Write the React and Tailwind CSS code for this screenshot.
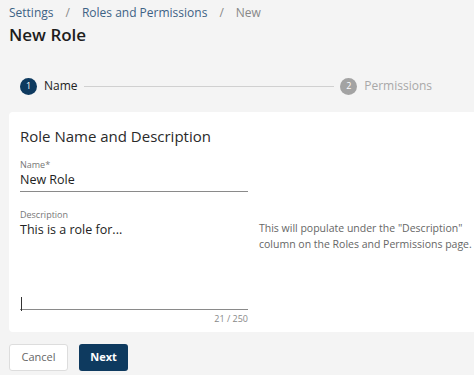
const Step = ({ n, label, active }) => (
  <div className="flex items-center gap-[7px]">
    <span
      className={`flex h-[17px] w-[17px] items-center justify-center rounded-full text-[9px] text-white ${
        active ? "bg-[#0e3a5f]" : "bg-[#a3a3a3]"
      }`}
    >
      {n}
    </span>
    <span className={`text-[12px] ${active ? "text-[#222]" : "text-[#a8a8a8]"}`}>
      {label}
    </span>
  </div>
);

export default function App() {
  return (
    <div
      className="min-h-[375px] w-[474px] overflow-hidden bg-[#f4f4f4] text-[#222]"
      style={{ fontFamily: '"Open Sans", sans-serif' }}
    >
      <div className="pl-[9px] pt-[4px]">
        <nav className="flex items-center text-[12px] leading-[18px]">
          <span className="text-[#3d6285]">Settings</span>
          <span className="mx-[12px] text-[#888]">/</span>
          <span className="text-[#3d6285]">Roles and Permissions</span>
          <span className="mx-[12px] text-[#888]">/</span>
          <span className="text-[#888]">New</span>
        </nav>
        <h1 className="mt-[2px] text-[17px] font-semibold leading-[22px] text-[#1d1d1d]">
          New Role
        </h1>
      </div>

      <div className="mt-[31px] flex items-center pl-[20px] pr-[42px]">
        <Step n={1} label="Name" active />
        <div className="mx-[6px] h-px flex-1 bg-[#d0d0d0]" />
        <Step n={2} label="Permissions" />
      </div>

      <div className="ml-[9px] mt-[17px] h-[220px] rounded-l-[4px] bg-white pl-[11px] pt-[13px]">
        <h2 className="text-[15px] leading-[22px] text-[#2a2a2a]">
          Role Name and Description
        </h2>
        <div className="mt-[12px] flex">
          <div className="w-[228px]">
            <div className="text-[9px] leading-[12px] text-[#777]">Name*</div>
            <div className="border-b border-[#8a8a8a] pb-[3px] text-[12.5px] leading-[17px]">
              New Role
            </div>
            <div className="mt-[17px] text-[9px] leading-[12px] text-[#777]">
              Description
            </div>
            <div className="relative h-[89px] border-b border-[#8a8a8a] text-[12.5px] leading-[17px]">
              This is a role for...
              <span className="absolute bottom-[-2px] left-[1px] h-[14px] w-px bg-[#333]" />
            </div>
            <div className="mt-[3px] text-right text-[9px] leading-[12px] text-[#888]">
              21 / 250
            </div>
          </div>
          <p className="ml-[11px] mt-[61px] whitespace-nowrap text-[10.5px] leading-[16px] text-[#666]">
            This will populate under the "Description"
            <br />
            column on the Roles and Permissions page.
          </p>
        </div>
      </div>

      <div className="ml-[9px] mt-[12px] flex gap-[11px]">
        <button className="h-[27px] w-[59px] rounded-[3px] border border-[#ddd] bg-white text-[11px] text-[#666]">
          Cancel
        </button>
        <button className="h-[27px] w-[49px] rounded-[3px] bg-[#0e3a5f] text-[11px] font-bold text-white">
          Next
        </button>
      </div>
    </div>
  );
}
